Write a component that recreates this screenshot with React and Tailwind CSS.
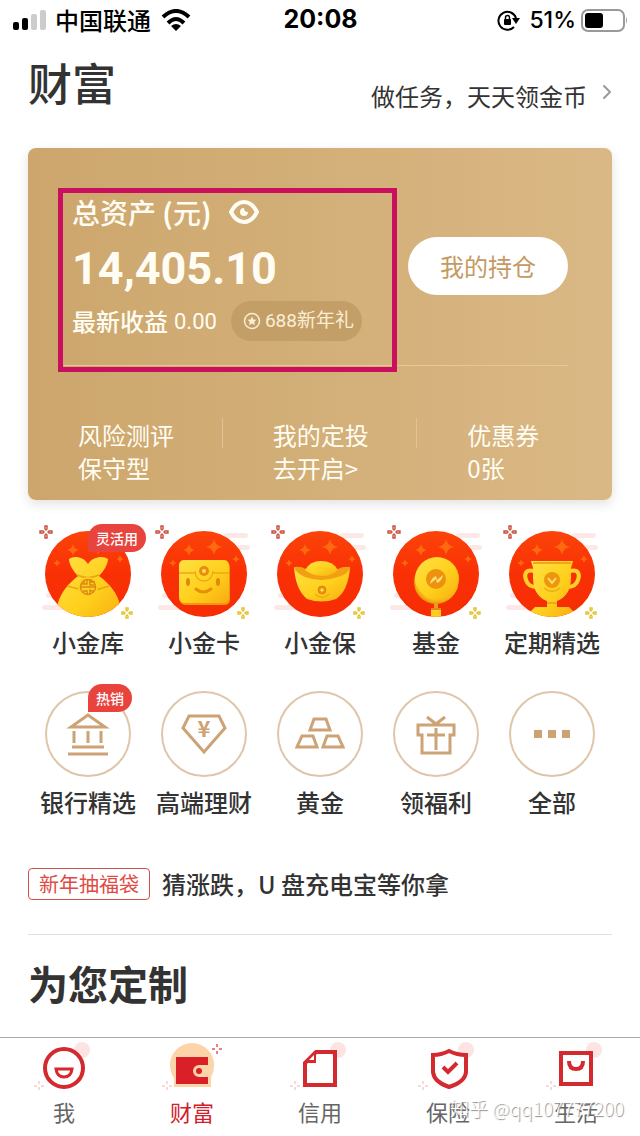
import { ChevronRight } from 'lucide-react'

// 卡片底部的三项
const assetLinks = [
  { id: 'risk', title: '风险测评', value: '保守型' },
  { id: 'plan', title: '我的定投', value: '去开启>' },
  { id: 'coupon', title: '优惠券', value: '0张' },
]

// 功能入口
const menuItems = [
  { id: 'vault', name: '小金库', icon: VaultIcon, tag: '灵活用' },
  { id: 'card', name: '小金卡', icon: CardIcon },
  { id: 'insure', name: '小金保', icon: IngotIcon },
  { id: 'fund', name: '基金', icon: FundIcon },
  { id: 'fixed', name: '定期精选', icon: TrophyIcon },
  { id: 'bank', name: '银行精选', icon: BankIcon, tag: '热销' },
  { id: 'premium', name: '高端理财', icon: DiamondIcon },
  { id: 'gold', name: '黄金', icon: GoldIcon },
  { id: 'gift', name: '领福利', icon: GiftIcon },
  { id: 'all', name: '全部', icon: MoreIcon },
]

// 底部标签
const tabs = [
  { id: 'me', name: '我', icon: MeIcon },
  { id: 'wealth', name: '财富', icon: WalletIcon, active: true },
  { id: 'credit', name: '信用', icon: CreditIcon },
  { id: 'insurance', name: '保险', icon: ShieldIcon },
  { id: 'life', name: '生活', icon: BagIcon },
]

function Sparkle({ x, y, color, r = 7 }) {
  return (
    <g transform={`translate(${x} ${y})`} fill="none" stroke={color}>
      {[0, 90, 180, 270].map((a) => (
        <path key={a} transform={`rotate(${a})`} d={`M-1 -3 V${-r + 1} H1 V-3 L0 -2 Z`} strokeWidth="1.4" />
      ))}
    </g>
  )
}

function Star({ x, y, r }) {
  return (
    <path
      transform={`translate(${x} ${y}) scale(${r})`}
      d="M0 -1 Q.15 -.15 1 0 Q.15 .15 0 1 Q-.15 .15 -1 0 Q-.15 -.15 0 -1Z"
      fill="#ff6a10"
    />
  )
}

// 红色圆底
function Festive({ id, children }) {
  return (
    <svg viewBox="0 0 116 100" className="h-[100px] w-[116px]" aria-hidden="true">
      <defs>
        <linearGradient id={`${id}-red`} x1="0" y1="0" x2="0" y2="1">
          <stop offset="0" stopColor="#fb4409" />
          <stop offset="0.5" stopColor="#fa3005" />
          <stop offset="1" stopColor="#f62c04" />
        </linearGradient>
        <linearGradient id={`${id}-gold`} x1="0" y1="0" x2="1" y2="1">
          <stop offset="0" stopColor="#ffe043" />
          <stop offset="0.55" stopColor="#ffd01c" />
          <stop offset="1" stopColor="#f9ac11" />
        </linearGradient>
        <clipPath id={`${id}-clip`}>
          <circle cx="58" cy="53" r="43" />
        </clipPath>
      </defs>
      <g fill="#fde8e8">
        <rect x="78" y="12" width="24" height="5" rx="2.5" />
        <rect x="90" y="24" width="14" height="5" rx="2.5" />
        <rect x="16" y="72" width="20" height="5" rx="2.5" />
        <rect x="12" y="84" width="30" height="5" rx="2.5" />
      </g>
      <circle cx="58" cy="53" r="43" fill={`url(#${id}-red)`} />
      <Star x={43} y={29} r={6} />
      <Star x={68} y={26} r={8} />
      <Star x={27} y={42} r={4} />
      <Star x={90} y={38} r={4} />
      <g clipPath={`url(#${id}-clip)`}>{children}</g>
      <Sparkle x={16} y={11} color="#c8503c" />
      <Sparkle x={97} y={92} color="#e3c12a" r={6} />
    </svg>
  )
}

function VaultIcon() {
  return (
    <Festive id="vault">
      <path d="M48 55 C43 50 39 43 39 38 C44 34 54 36 58 43 C62 36 73 34 78 38 C78 43 74 50 69 55 C79 62 88 73 90 84 C91 93 89 99 84 102 L32 102 C27 98 26 90 28 82 C31 71 39 62 48 55 Z" fill="url(#vault-gold)" />
      <path d="M47 54 Q58 59 69 54 M37 65 Q48 68 58 70 Q69 69 79 65" fill="none" stroke="#eaa416" strokeWidth="1.5" />
      <circle cx="58" cy="66" r="10" fill="#ffcf20" />
      <g fill="none" stroke="#d98a10" strokeWidth="1.4">
        <circle cx="58" cy="66" r="7.5" />
        <path d="M51 63 H57 V59 M59 61 H65 M51 66 H65 M53 70 H57 V73 M60 59 V64 H64 M54 60 V63 M60 68 V73 M60 70 H64" />
      </g>
    </Festive>
  )
}

function CardIcon() {
  return (
    <Festive id="card">
      <rect x="34" y="41" width="50" height="43" rx="5" fill="#f0970c" />
      <rect x="33" y="39" width="50" height="43" rx="5" fill="url(#card-gold)" />
      <path d="M33 52 H49 M67 52 H83 M49 50 Q50 60 58 60 Q66 60 67 50" fill="none" stroke="#eda916" strokeWidth="1.3" />
      <circle cx="58" cy="50" r="5" fill="#e98d0c" />
      <circle cx="58" cy="50" r="2" fill="#ffe15a" />
      <ellipse cx="42" cy="61" rx="2" ry="4" fill="#dd8a08" />
      <ellipse cx="72" cy="61" rx="2" ry="4" fill="#dd8a08" />
      <path d="M50 68 Q57 74 65 68" fill="none" stroke="#e59108" strokeWidth="3" strokeLinecap="round" />
    </Festive>
  )
}

function IngotIcon() {
  return (
    <Festive id="ingot">
      <path d="M32 46 Q58 58 88 46 C87 62 82 73 74 78 Q60 83 45 78 C37 71 33 61 32 46 Z" fill="url(#ingot-gold)" />
      <path d="M32 46 Q39 45 44 48 Q59 55 76 48 Q81 45 88 46 Q87 53 76 56 Q59 62 43 56 Q34 52 32 46 Z" fill="#f0a012" />
      <path d="M43 49 Q48 40 59 40 Q71 40 76 49 Q70 55 59 55 Q49 54 43 49Z" fill="url(#ingot-gold)" />
      <circle cx="60" cy="69" r="4" fill="#e7950f" stroke="#dc860c" strokeWidth="1" />
      <path d="M58 69 L60 67 L62 69 L60 71 Z" fill="#ffdf50" />
      <path d="M53 73 Q60 80 67 73" fill="none" stroke="#eca916" strokeWidth="1.3" />
    </Festive>
  )
}

function FundIcon() {
  return (
    <Festive id="fund">
      <rect x="56" y="78" width="4" height="12" fill="#ef9a16" />
      <circle cx="58" cy="61" r="22" fill="#f19c11" />
      <circle cx="59" cy="58" r="22" fill="url(#fund-gold)" />
      <path d="M38 66 Q46 80 58 80 Q73 80 79 66" fill="none" stroke="#f6b512" strokeWidth="2" />
      <circle cx="58" cy="58" r="10" fill="#ee910e" />
      <path d="M52 63 Q53 57 58 55 L59 59 L65 54 Q64 60 59 62 L58 58 Z" fill="#ffe07a" />
      <rect x="53" y="87" width="10" height="9" fill="#ffcb25" />
      <rect x="53" y="87" width="10" height="2" fill="#e38812" />
    </Festive>
  )
}

function TrophyIcon() {
  return (
    <Festive id="trophy">
      <path d="M40 50 C31 48 30 54 32 59 C34 65 38 66 43 66 M76 50 C85 48 86 54 84 59 C82 65 78 66 73 66" fill="none" stroke="#ffd127" strokeWidth="4" />
      <path d="M37 40 H79 L77 47 V57 C77 70 71 77 63 80 V86 H75 L79 90 V98 H37 V90 L41 86 H53 V80 C45 77 39 70 39 57 V47 Z" fill="url(#trophy-gold)" />
      <path d="M39 42 H77" stroke="#efa814" strokeWidth="2" />
      <path d="M53 82 H63" stroke="#f0aa14" strokeWidth="2" />
      <circle cx="58" cy="59" r="8" fill="#ed970e" />
      <path d="M54 57 L58 62 L62 57" fill="none" stroke="#ffdf6b" strokeWidth="2" />
      <path d="M50 67 Q58 74 66 67" fill="none" stroke="#edaa18" strokeWidth="1.5" />
    </Festive>
  )
}

// 金色描边圆
function Outline({ children }) {
  return (
    <svg viewBox="0 0 116 100" className="h-[100px] w-[116px]" fill="none" stroke="#cda274" strokeWidth="3" aria-hidden="true">
      <circle cx="58" cy="53" r="42" stroke="#dfc6ab" strokeWidth="2" />
      {children}
    </svg>
  )
}

function BankIcon() {
  return (
    <Outline>
      <path d="M58 34 L41 46 H75 Z M44 50 V62 M58 50 V62 M71 50 V62 M42 66 H74 M38 73 H78" />
    </Outline>
  )
}

function DiamondIcon() {
  return (
    <Outline>
      <path d="M43 35 H73 L79 47 L58 71 L37 47 Z" />
      <text x="58" y="56" textAnchor="middle" fontSize="22" fontWeight="700" fill="#cda274" stroke="none">¥</text>
    </Outline>
  )
}

function GoldIcon() {
  return (
    <Outline>
      <path d="M52 38 H64 L68 49 H48 Z M40 55 H51 L55 66 H35 Z M65 55 H76 L81 66 H61 Z" />
    </Outline>
  )
}

function GiftIcon() {
  return (
    <Outline>
      <path d="M40 44 H76 V54 H72 V72 H44 V54 H40 Z M58 47 V69 M49 54 H67 M49 36 L58 43 L67 36" />
    </Outline>
  )
}

function MoreIcon() {
  return (
    <Outline>
      <path d="M40 53 H48 M54 53 H62 M68 53 H76" strokeWidth="8" />
    </Outline>
  )
}

function TabSvg({ blob = true, children }) {
  return (
    <svg viewBox="0 0 64 50" className="h-[50px] w-16" fill="none" stroke="#d4292f" strokeWidth="4" aria-hidden="true">
      {blob && <circle cx="50" cy="10" r="8" fill="#fde4e2" stroke="none" />}
      <path d="M7 41 V44 M7 47 V50 M2 46 H5 M9 46 H12" stroke="#f3b5b5" strokeWidth="1" />
      {children}
    </svg>
  )
}

function MeIcon() {
  return (
    <TabSvg>
      <circle cx="32" cy="28" r="19" />
      <path d="M24 29 H40 Q39 37 32 37 Q25 37 24 29 Z" strokeWidth="3" />
    </TabSvg>
  )
}

function WalletIcon() {
  return (
    <TabSvg blob={false}>
      <path d="M14 47 V38 Q10 32 10 25 A22 22 0 0 1 54 25 Q54 32 51 37 V47 Z" fill="#fdd3a8" stroke="none" />
      <path d="M16 17 H48 V25 H39 A6 6 0 0 0 39 37 H48 V44 H16 Z" fill="#d91f27" stroke="none" />
      <circle cx="39" cy="31" r="3" fill="#d91f27" stroke="none" />
      <path d="M57 4 V7 M57 11 V14 M52 9 H55 M59 9 H62" stroke="#dc5666" strokeWidth="1.5" />
    </TabSvg>
  )
}

function CreditIcon() {
  return (
    <TabSvg>
      <path d="M17 23 L28 12 H47 V45 H17 Z" />
      <path d="M15 23 L28 10 V23 Z" fill="#d4292f" stroke="none" />
      <path d="M21 20 L26 15 V20 Z" fill="#fff" stroke="none" />
    </TabSvg>
  )
}

function ShieldIcon() {
  return (
    <TabSvg>
      <path d="M33 11 Q41 15 50 15 V32 Q49 42 33 47 Q18 42 17 32 V15 Q25 15 33 11 Z" />
      <path d="M27 27 L32 32 L41 23" />
    </TabSvg>
  )
}

function BagIcon() {
  return (
    <TabSvg>
      <path d="M17 13 H47 V44 H17 Z" />
      <path d="M25 21 Q25 29 32 29 Q39 29 39 21" />
    </TabSvg>
  )
}

function StatusBar() {
  return (
    <div className="grid h-10 grid-cols-[1fr_auto_1fr] items-center pr-3 pl-[13px] text-black">
      <div className="flex items-center">
        <svg viewBox="0 0 34 22" className="h-[22px] w-[34px]" aria-hidden="true">
          <rect x="0" y="13" width="6" height="8" rx="2" />
          <rect x="9" y="9" width="6" height="12" rx="2" />
          <rect x="18" y="5" width="6" height="16" rx="2" fill="#ccc" />
          <rect x="27" y="1" width="6" height="20" rx="2" fill="#ccc" />
        </svg>
        <span className="ml-2 text-2xl font-medium">中国联通</span>
        <svg viewBox="0 0 30 22" className="ml-[10px] h-[22px] w-[30px]" fill="none" stroke="#000" strokeWidth="4" aria-hidden="true">
          <path d="M2 8 Q15 -4 28 8" />
          <path d="M7 14 Q15 6 23 14" />
          <path d="M15 22 L10 17 Q15 13 20 17 Z" fill="#000" stroke="none" />
        </svg>
      </div>
      <time className="font-['Inter','Noto_Sans_CJK_SC',sans-serif] text-[25px] font-bold">20:08</time>
      <div className="flex items-center justify-end">
        <svg viewBox="0 0 24 22" className="h-[22px] w-6" aria-hidden="true">
          <path d="M17 18 A9 9 0 1 1 19 9" fill="none" stroke="#000" strokeWidth="2" />
          <path d="M15 9 H23 L19 15 Z" />
          <rect x="7" y="10" width="7" height="6" rx="1" />
          <path d="M8.5 11 V8.5 A2 2 0 0 1 12.5 8.5 V11" fill="none" stroke="#000" strokeWidth="1.5" />
        </svg>
        <span className="ml-2 font-['Inter','Noto_Sans_CJK_SC',sans-serif] text-[23px] font-medium">51%</span>
        <svg viewBox="0 0 48 24" className="ml-1 h-6 w-12" aria-hidden="true">
          <rect x="2" y="2" width="42" height="21" rx="6" fill="none" stroke="#999" strokeWidth="2" />
          <rect x="5" y="5" width="18" height="15" rx="3" />
          <path d="M46 9 Q48 12 46 16 Z" fill="#999" />
        </svg>
      </div>
    </div>
  )
}

function AssetCard() {
  return (
    <section className="relative mx-7 rounded-lg bg-linear-to-r from-[#cca66c] to-[#dab885] text-[#fffdf3] shadow-[0_4px_12px_rgba(0,0,0,0.12)]">
      <div className="flex items-start justify-between pr-11 pb-6 pl-11">
        <div className="pt-12">
          <div className="flex items-center gap-4">
            <h2 className="text-[28px] leading-8 font-medium">总资产 <b>(</b>元<b>)</b></h2>
            <button aria-label="隐藏金额">
              <svg viewBox="0 0 32 26" className="h-[26px] w-8" fill="none" stroke="currentColor" strokeWidth="4" aria-hidden="true">
                <path d="M3 13 Q8 3 16 3 Q24 3 29 13 Q24 23 16 23 Q8 23 3 13 Z" />
                <path d="M16 9 A4 4 0 1 0 20 13 Q16 13 16 9 Z" fill="currentColor" stroke="none" />
              </svg>
            </button>
          </div>
          <p className="mt-[13px] font-['Roboto','Noto_Sans_CJK_SC',sans-serif] text-[45px] leading-14 font-bold">14,405.10</p>
          <div className="mt-1 flex items-center">
            <span className="text-2xl font-medium">最新收益</span>
            <span className="ml-[6px] font-['Roboto','Noto_Sans_CJK_SC',sans-serif] text-[22px]">0.00</span>
            <button className="ml-[14px] flex h-10 items-center gap-1 rounded-full bg-[#c49e67] pr-2 pl-3 font-['Roboto','Noto_Sans_CJK_SC',sans-serif] text-[19px] text-[#fbeed4]">
              <svg viewBox="0 0 18 18" className="size-[18px]" fill="none" stroke="currentColor" strokeWidth="1.5" aria-hidden="true">
                <circle cx="9" cy="9" r="7.5" />
                <path d="M9 4.5 L10.4 7.5 L13.5 7.8 L11.2 10 L11.9 13.2 L9 11.5 L6.1 13.2 L6.8 10 L4.5 7.8 L7.6 7.5 Z" fill="currentColor" stroke="none" />
              </svg>
              688新年礼
            </button>
          </div>
        </div>
        <button className="mt-[89px] h-[58px] w-40 rounded-full bg-white text-2xl text-[#c49a62]">我的持仓</button>
      </div>
      <div className="mr-11 ml-9 border-t border-[#e4c79b]" />
      <div className="grid grid-cols-3 pt-[52px] pb-4">
        {assetLinks.map((item) => (
          <a key={item.id} href="#" className="group relative pl-[50px] text-2xl leading-[33px]">
            <span className="block">{item.title}</span>
            <span className="block">{item.value}</span>
            <i className="absolute top-0 right-0 h-[30px] w-px bg-[#e0c396] group-last:hidden" />
          </a>
        ))}
      </div>
      {/* 资产区域标注框 */}
      <div className="pointer-events-none absolute top-10 left-[30px] h-[184px] w-[339px] border-5 border-[#c9105f]" />
    </section>
  )
}

export default function App() {
  return (
    <div lang="zh-CN" className="flex min-h-screen flex-col bg-white font-['Noto_Sans_CJK_SC',sans-serif] text-[#333]">
      <StatusBar />

      <header className="mb-9 flex items-start justify-between pt-5 pr-[21px] pl-7">
        <h1 className="text-[44px] leading-[44px] font-medium">财富</h1>
        <a href="#" className="mt-5 flex items-center gap-2 text-2xl leading-7">
          做任务，天天领金币
          <ChevronRight className="mb-2 size-6 text-[#999]" strokeWidth={2} />
        </a>
      </header>

      <AssetCard />

      {/* 功能入口 */}
      <nav className="mx-[30px] mt-[21px] grid grid-cols-5 gap-y-[23px]">
        {menuItems.map((item) => {
          const Icon = item.icon
          return (
            <a key={item.id} href="#" className="relative flex flex-col items-center gap-[5px] text-2xl leading-8 font-medium whitespace-nowrap">
              <Icon />
              {item.tag && (
                <span className="absolute top-[3px] left-1/2 h-7 rounded-[14px] rounded-bl-none bg-[#e8433d] px-2 text-sm leading-7 text-white">
                  {item.tag}
                </span>
              )}
              {item.name}
            </a>
          )
        })}
      </nav>

      <a href="#" className="mx-7 mt-[50px] flex items-center gap-3 text-2xl leading-8">
        <span className="h-8 rounded border border-[#d0504c] px-[10px] text-xl leading-[30px] text-[#df4a43]">新年抽福袋</span>
        <span className="font-medium">猜涨跌，U 盘充电宝等你拿</span>
      </a>
      <hr className="mx-7 mt-[34px] border-[#e2e2e2]" />
      <h2 className="mx-7 mt-6 text-[40px] leading-12 font-bold">为您定制</h2>

      {/* 底部标签栏 */}
      <footer className="relative mt-auto border-t border-[#aaa]">
        <nav className="grid grid-cols-5 pt-[2px] pb-[11px]">
          {tabs.map((tab) => {
            const Icon = tab.icon
            return (
              <a
                key={tab.id}
                href="#"
                className={`flex flex-col items-center gap-[7px] text-[22px] leading-7 ${tab.active ? 'text-[#d0202e]' : 'text-[#666]'}`}
              >
                <Icon />
                {tab.name}
              </a>
            )
          })}
        </nav>
        <span className="pointer-events-none absolute right-4 bottom-[14px] text-[19px] leading-7 font-light text-white [text-shadow:1px_1px_1px_#888]">
          知乎 @qq107777200
        </span>
      </footer>
    </div>
  )
}
